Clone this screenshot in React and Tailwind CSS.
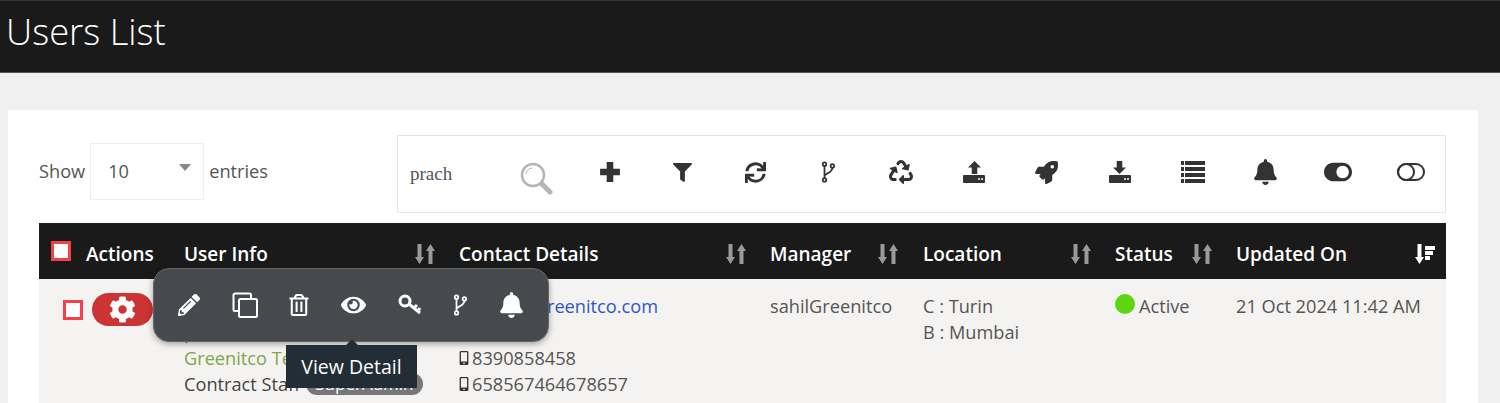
import { FaFilter, FaSync, FaRecycle, FaRocket, FaBell, FaToggleOn, FaCog, FaPencilAlt, FaRegTrashAlt, FaEye, FaMobileAlt } from 'react-icons/fa';

const Branch = ({ className }) => (
  <svg viewBox="0 0 16 24" className={className} fill="none" stroke="currentColor" strokeWidth="2">
    <circle cx="4" cy="3" r="2" />
    <circle cx="13" cy="5" r="2" />
    <circle cx="4" cy="21" r="2" />
    <path d="M4 5v14M13 7c0 5-6 6-9 9" />
  </svg>
);

const Plus = () => (
  <svg viewBox="0 0 20 20" className="h-[22px] w-[22px]" fill="currentColor">
    <path d="M7 1h6v6h6v6h-6v6H7v-6H1V7h6z" />
  </svg>
);

const Tray = ({ up }) => (
  <span className="flex h-[22px] w-[24px] flex-col items-center justify-between">
    <svg viewBox="0 0 14 14" className="h-[13px] w-[13px]" fill="currentColor">
      <path d={up ? 'M7 0l7 7H10v7H4V7H0z' : 'M4 0h6v7h4l-7 7-7-7h4z'} />
    </svg>
    <span className="flex h-[8px] w-[22px] items-center justify-end gap-[1px] rounded-[1px] bg-[#333] pr-[2px]">
      <span className="h-[2px] w-[2px] rounded-full bg-white" />
      <span className="h-[2px] w-[2px] rounded-full bg-white" />
    </span>
  </span>
);

const ListIcon = () => (
  <span className="flex w-[24px] flex-col gap-[2px]">
    {[0, 1, 2, 3].map((row) => (
      <span key={row} className="flex gap-[1px]">
        <span className="h-[4px] w-[3px] bg-[#333]" />
        <span className="h-[4px] flex-1 bg-[#333]" />
      </span>
    ))}
  </span>
);

const ToggleOff = () => (
  <span className="relative block h-[18px] w-[28px] rounded-full border-2 border-[#333]">
    <span className="absolute -left-[2px] -top-[2px] h-[18px] w-[18px] rounded-full border-2 border-[#333]" />
  </span>
);

const Sort = () => (
  <svg viewBox="0 0 20 22" className="h-[22px] w-[20px] text-[#9a9a9a]" fill="currentColor">
    <path d="M2.500 1h4v13H9l-4.500 7L0 14h2.500z" />
    <path d="M13.500 21h4V8H20L15.500 1 11 8h2.500z" />
  </svg>
);

const SortActive = () => (
  <span className="flex items-center gap-[1px] text-white">
    <svg viewBox="0 0 9 22" className="h-[22px] w-[9px]" fill="currentColor">
      <path d="M2.500 1h4v13H9l-4.500 7L0 14h2.500z" />
    </svg>
    <span className="flex flex-col gap-[1px] pb-[3px]">
      <span className="h-[4px] w-[10px] bg-white" />
      <span className="h-[4px] w-[8px] bg-white" />
      <span className="h-[4px] w-[5px] bg-white" />
    </span>
  </span>
);

const CopyIcon = () => (
  <svg viewBox="0 0 26 26" className="h-[26px] w-[26px]" fill="none" stroke="currentColor" strokeWidth="2">
    <path d="M6 19H3a1.500 1.500 0 0 1-1.500-1.500V3A1.500 1.500 0 0 1 3 1.500h14.500A1.500 1.500 0 0 1 19 3v3" />
    <rect x="7" y="7" width="18" height="18" rx="1.500" />
  </svg>
);

const KeyIcon = () => (
  <svg viewBox="0 0 24 24" className="h-[24px] w-[24px]" fill="none" stroke="currentColor" strokeWidth="3">
    <circle cx="7" cy="8" r="5" />
    <path d="M11 11l11 9M16 15l3-3M20 18l2-3" />
  </svg>
);

const tools = [
  <Plus />,
  <FaFilter className="h-[19px] w-[19px]" />,
  <FaSync className="h-[21px] w-[21px]" />,
  <Branch className="h-[24px] w-[14px]" />,
  <FaRecycle className="h-[24px] w-[24px]" />,
  <Tray up />,
  <FaRocket className="h-[23px] w-[23px]" />,
  <Tray />,
  <ListIcon />,
  <FaBell className="h-[26px] w-[25px]" />,
  <FaToggleOn className="h-[28px] w-[28px]" />,
  <ToggleOff />,
];

const columns = 'grid grid-cols-[145px_275px_311px_153px_192px_121px_1fr]';

const Checkbox = ({ className = '' }) => (
  <span className={'block h-[20px] w-[20px] border-[3px] border-[#f5404a] bg-white ' + className} />
);

const Phone = ({ number }) => (
  <div className="flex items-center gap-[3px]">
    <FaMobileAlt className="h-[14px] w-[10px] text-[#333]" />
    <span>{number}</span>
  </div>
);

export default function App() {
  return (
    <div className="relative h-[403px] overflow-hidden bg-[#f0f0f0] font-['Open_Sans',sans-serif] text-[#555]">
      <header className="flex h-[73px] items-center border-y border-t-[#333] border-b-[#555] bg-[#1a1a1a] pb-[11px] pl-[6px]">
        <h1 className="text-[36.4px] font-light text-white">Users List</h1>
      </header>

      <main className="mx-[8px] mt-[37px] h-[300px] w-[1470px] bg-white pl-[31px] pt-[25px]">
        <div className="flex w-[1407px] items-start">
          <div className="mt-[8px] flex items-center gap-[5px] text-[18.2px]">
            <span>Show</span>
            <div className="flex h-[57px] w-[114px] items-start justify-between border border-[#eee] pl-[17px] pr-[12px] pt-[14px]">
              <span>10</span>
              <span className="mt-[6px] h-0 w-0 border-x-[6px] border-t-[7px] border-x-transparent border-t-[#888]" />
            </div>
            <span>entries</span>
          </div>

          <div className="ml-auto flex h-[78px] w-[1049px] items-center border border-[#e4e4e4] pl-[12px] pr-[20px]">
            <input
              readOnly
              value="prach"
              className="w-[109px] font-['Liberation_Serif',serif] text-[19px] text-[#555] outline-none"
            />
            <svg viewBox="0 0 34 34" className="mt-[7px] h-[34px] w-[34px] text-[#b5b5b5]" fill="none" stroke="currentColor">
              <circle cx="14" cy="14" r="11" strokeWidth="2.500" />
              <path d="M7 13a7 7 0 0 1 6-6" strokeWidth="1" />
              <path d="M23 23l8 8" strokeWidth="5" strokeLinecap="round" />
            </svg>
            <div className="mb-[4px] ml-[43px] flex flex-1 items-center justify-between text-[#333]">
              {tools.map((icon, i) => (
                <span key={i} className="flex w-[28px] items-center justify-center">
                  {icon}
                </span>
              ))}
            </div>
          </div>
        </div>

        <div className="mt-[10px] w-[1407px]">
          <div className={columns + ' h-[56px] items-center bg-[#1a1a1a] pt-[6px] text-[19px] font-semibold text-white'}>
            <div className="flex items-center gap-[15px] pl-[12px]">
              <Checkbox className="mb-[7px]" />
              <span>Actions</span>
            </div>
            <div className="flex items-center justify-between pr-[24px]"><span>User Info</span><Sort /></div>
            <div className="flex items-center justify-between pr-[24px]"><span>Contact Details</span><Sort /></div>
            <div className="flex items-center justify-between pr-[25px]"><span>Manager</span><Sort /></div>
            <div className="flex items-center justify-between pr-[24px]"><span>Location</span><Sort /></div>
            <div className="flex items-center justify-between pr-[24px]"><span>Status</span><Sort /></div>
            <div className="flex items-center justify-between pr-[11px]"><span>Updated On</span><SortActive /></div>
          </div>

          <div className={columns + ' h-[124px] bg-[#f4f3f1] pt-[14px] text-[18.2px] leading-[26px]'}>
            <div className="flex items-start gap-[9px] pl-[24px]">
              <Checkbox className="mt-[7px]" />
              <span className="flex h-[33px] w-[61px] items-center justify-center rounded-full bg-[#cc3333] text-white">
                <FaCog className="h-[27px] w-[27px]" />
              </span>
            </div>
            <div className="text-[#444]">
              <div>Prachi</div>
              <div className="text-[#d33]">prachi</div>
              <div className="text-[#7da74a]">Greenitco Technologies</div>
              <div className="flex items-center gap-[6px]">
                <span>Contract Staff</span>
                <span className="rounded-full bg-[#777] px-[9px] text-[17px] leading-[22px] text-white">SuperAdmin</span>
              </div>
            </div>
            <div>
              <div className="text-[#2f56c8]">prachis@greenitco.com</div>
              <div className="h-[26px]" />
              <Phone number="8390858458" />
              <Phone number="658567464678657" />
            </div>
            <div>sahilGreenitco</div>
            <div>
              <div>C : Turin</div>
              <div>B : Mumbai</div>
            </div>
            <div className="flex items-start gap-[4px]">
              <span className="mt-[1px] h-[20px] w-[20px] rounded-full bg-[#5cd60f]" />
              <span>Active</span>
            </div>
            <div>21 Oct 2024 11:42 AM</div>
          </div>
        </div>
      </main>

      {/* action popover over the first row */}
      <div className="absolute left-[153px] top-[268px] flex h-[74px] w-[396px] items-center justify-between rounded-[16px] border border-[#666] bg-[#464a4e] pl-[24px] pr-[24px] text-white shadow-[0_2px_6px_rgba(0,0,0,0.35)]">
        <FaPencilAlt className="h-[22px] w-[22px]" />
        <CopyIcon />
        <FaRegTrashAlt className="h-[22px] w-[20px]" />
        <FaEye className="h-[24px] w-[25px]" />
        <KeyIcon />
        <Branch className="h-[24px] w-[14px]" />
        <FaBell className="h-[26px] w-[25px]" />
      </div>

      {/* tooltip */}
      <div className="absolute left-[286px] top-[345px] flex h-[43px] w-[131px] items-center justify-center bg-[#232d36] text-[19.5px] text-white">
        <span className="absolute -top-[6px] left-[60px] h-0 w-0 border-x-[6px] border-b-[6px] border-x-transparent border-b-[#232d36]" />
        View Detail
      </div>
    </div>
  );
}
